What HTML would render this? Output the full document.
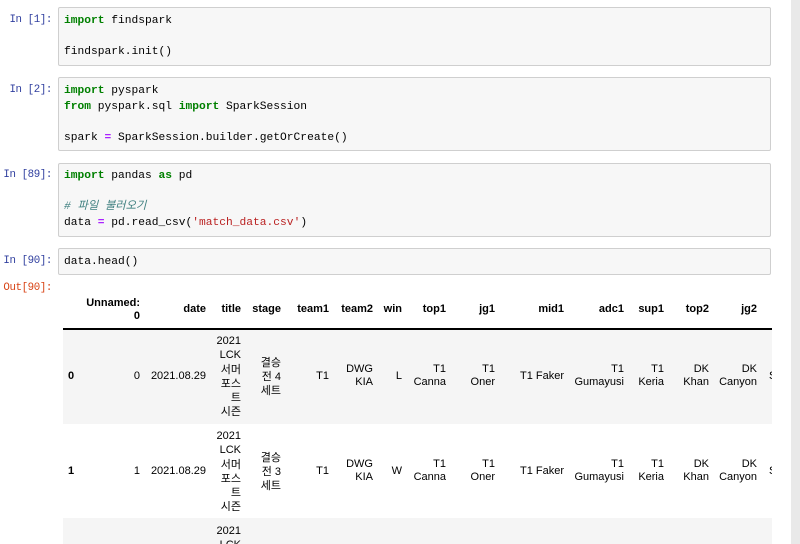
<!DOCTYPE html>
<html><head><meta charset="utf-8"><style>
body{margin:0;width:800px;height:544px;overflow:hidden;background:#fff;position:relative;font-family:"Liberation Sans","Noto Sans CJK KR",sans-serif;}
.sb{position:absolute;left:791px;top:0;width:9px;height:544px;background:#e9e9e9}
.p{position:absolute;right:748px;font:10.8px "Liberation Mono","Noto Sans CJK KR",monospace;color:#303F9F;white-space:pre;letter-spacing:-0.4px}
.o{color:#D84315}
.cell{position:absolute;left:58px;width:713px;background:#f7f7f7;border:1px solid #cfcfcf;border-radius:2px;box-sizing:border-box}
.code{position:absolute;left:64px;font:11.25px/15.5px "Liberation Mono","Noto Sans CJK KR",monospace;color:#000;white-space:pre}
.k{color:#008000;font-weight:bold}
.op{color:#AA22FF;font-weight:bold}
.s{color:#BA2121}
.c{color:#408080;font-style:italic}
.t{position:absolute;left:63px;top:290px;width:709px;height:254px;overflow:hidden}
.hl{position:absolute;left:0;top:38px;width:709px;height:1.5px;background:#000}
.r0{position:absolute;left:0;top:40px;width:709px;height:94px;background:#f5f5f5}
.r2{position:absolute;left:0;top:228px;width:709px;height:40px;background:#f5f5f5}
.x{position:absolute;font-size:11px;line-height:13px;text-align:right;color:#000;white-space:nowrap}
.b{font-weight:bold}
</style></head><body>
<div class="sb"></div>

<div class="p" style="top:14px">In [1]:</div>
<div class="cell" style="top:7px;height:59px"></div>
<div class="code" style="top:14px"><span class="k">import</span> findspark

findspark.init()</div>

<div class="p" style="top:84px">In [2]:</div>
<div class="cell" style="top:77px;height:74px"></div>
<div class="code" style="top:84px"><span class="k">import</span> pyspark
<span class="k">from</span> pyspark.sql <span class="k">import</span> SparkSession

spark <span class="op">=</span> SparkSession.builder.getOrCreate()</div>

<div class="p" style="top:169px">In [89]:</div>
<div class="cell" style="top:163px;height:74px"></div>
<div class="code" style="top:169px"><span class="k">import</span> pandas <span class="k">as</span> pd

<span class="c"># 파일 불러오기</span>
data <span class="op">=</span> pd.read_csv(<span class="s">'match_data.csv'</span>)</div>

<div class="p" style="top:255px">In [90]:</div>
<div class="cell" style="top:248px;height:27px"></div>
<div class="code" style="top:255px">data.head()</div>

<div class="p o" style="top:282px">Out[90]:</div>

<div class="t">
<div class="r0"></div><div class="r2"></div><div class="hl"></div>
<div class="x b" style="right:632px;top:7px">Unnamed:<br>0</div>
<div class="x b" style="right:566px;top:13px">date</div>
<div class="x b" style="right:531px;top:13px">title</div>
<div class="x b" style="right:491px;top:13px">stage</div>
<div class="x b" style="right:443px;top:13px">team1</div>
<div class="x b" style="right:399px;top:13px">team2</div>
<div class="x b" style="right:370px;top:13px">win</div>
<div class="x b" style="right:326px;top:13px">top1</div>
<div class="x b" style="right:277px;top:13px">jg1</div>
<div class="x b" style="right:208px;top:13px">mid1</div>
<div class="x b" style="right:148px;top:13px">adc1</div>
<div class="x b" style="right:108px;top:13px">sup1</div>
<div class="x b" style="right:63px;top:13px">top2</div>
<div class="x b" style="right:15px;top:13px">jg2</div>

<div class="x b" style="left:5px;top:80px">0</div>
<div class="x" style="right:632px;top:80px">0</div>
<div class="x" style="right:566px;top:80px">2021.08.29</div>
<div class="x" style="right:531px;top:44px;line-height:14.3px">2021<br>LCK<br>서머<br>포스<br>트<br>시즌</div>
<div class="x" style="right:491px;top:66px;line-height:14px">결승<br>전 4<br>세트</div>
<div class="x" style="right:443px;top:80px">T1</div>
<div class="x" style="right:399px;top:73px">DWG<br>KIA</div>
<div class="x" style="right:370px;top:80px">L</div>
<div class="x" style="right:326px;top:73px">T1<br>Canna</div>
<div class="x" style="right:277px;top:73px">T1<br>Oner</div>
<div class="x" style="right:208px;top:80px">T1 Faker</div>
<div class="x" style="right:148px;top:73px">T1<br>Gumayusi</div>
<div class="x" style="right:108px;top:73px">T1<br>Keria</div>
<div class="x" style="right:63px;top:73px">DK<br>Khan</div>
<div class="x" style="right:15px;top:73px">DK<br>Canyon</div>
<div class="x" style="left:706px;top:80px">S</div>

<div class="x b" style="left:5px;top:175px">1</div>
<div class="x" style="right:632px;top:175px">1</div>
<div class="x" style="right:566px;top:175px">2021.08.29</div>
<div class="x" style="right:531px;top:139px;line-height:14.3px">2021<br>LCK<br>서머<br>포스<br>트<br>시즌</div>
<div class="x" style="right:491px;top:161px;line-height:14px">결승<br>전 3<br>세트</div>
<div class="x" style="right:443px;top:175px">T1</div>
<div class="x" style="right:399px;top:168px">DWG<br>KIA</div>
<div class="x" style="right:370px;top:175px">W</div>
<div class="x" style="right:326px;top:168px">T1<br>Canna</div>
<div class="x" style="right:277px;top:168px">T1<br>Oner</div>
<div class="x" style="right:208px;top:175px">T1 Faker</div>
<div class="x" style="right:148px;top:168px">T1<br>Gumayusi</div>
<div class="x" style="right:108px;top:168px">T1<br>Keria</div>
<div class="x" style="right:63px;top:168px">DK<br>Khan</div>
<div class="x" style="right:15px;top:168px">DK<br>Canyon</div>
<div class="x" style="left:706px;top:175px">S</div>

<div class="x" style="right:531px;top:234px;line-height:14.3px">2021<br>LCK</div>
</div>
</body></html>
